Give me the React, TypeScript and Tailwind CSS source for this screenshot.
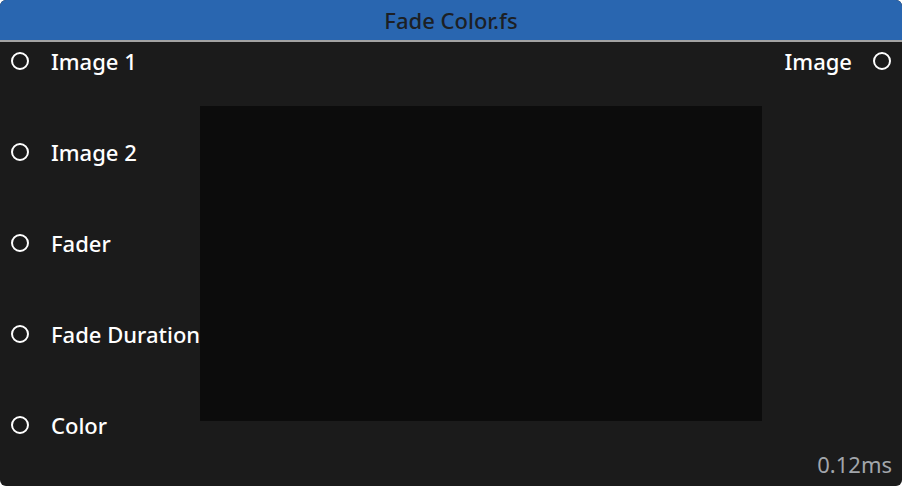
const inputs = ['Image 1', 'Image 2', 'Fader', 'Fade Duration', 'Color'];

function Port() {
  return (
    <span
      className="block w-[18px] h-[18px] rounded-full border-2 border-white shrink-0"
      aria-hidden="true"
    />
  );
}

export default function App() {
  return (
    <div className="w-[902px] h-[486px] bg-white">
      <div
        className="w-full h-full rounded-[6px] overflow-hidden bg-[#1b1b1b] flex flex-col"
        style={{ fontFamily: '"Noto Sans", "Open Sans", sans-serif' }}
      >
        {/* Title bar */}
        <div className="h-[40px] bg-[#2966b0] flex items-center justify-center text-[22px] font-medium text-[#1c1f24] shrink-0">
          Fade Color.fs
        </div>
        <div className="h-[2px] bg-[#a3a3a3] shrink-0" />

        {/* Body */}
        <div className="flex flex-1 relative">
          {/* Inputs */}
          <div className="w-[200px] flex flex-col gap-[53px] shrink-0">
            {inputs.map((label) => (
              <div key={label} className="h-[38px] flex items-center pl-[11px]">
                <Port />
                <span className="ml-[22px] text-[22px] font-medium text-white whitespace-nowrap">
                  {label}
                </span>
              </div>
            ))}
          </div>

          {/* Preview */}
          <div className="mt-[64px] w-[562px] h-[315px] bg-[#0c0c0c] shrink-0" />

          {/* Output */}
          <div className="flex-1 flex flex-col justify-between">
            <div className="h-[38px] flex items-center justify-end pr-[11px]">
              <span className="mr-[21px] text-[22px] font-medium text-white">Image</span>
              <Port />
            </div>
            <div className="pr-[10px] pb-[5px] text-right text-[22px] text-[#a2a6ab]">0.12ms</div>
          </div>
        </div>
      </div>
    </div>
  );
}
